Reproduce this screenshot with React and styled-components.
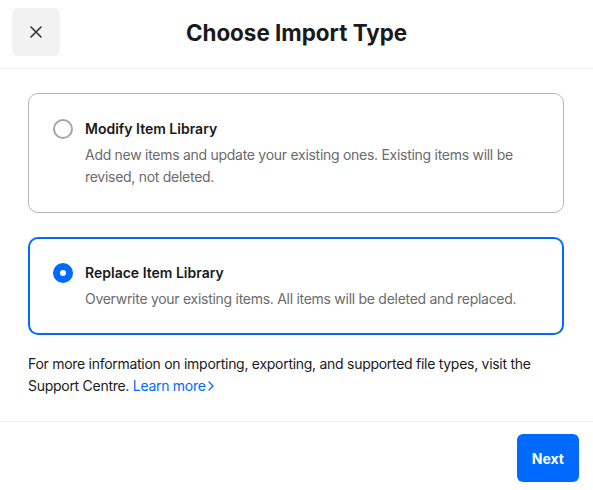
import React, { useState } from 'react';
import styled, { createGlobalStyle } from 'styled-components';

const GlobalStyle = createGlobalStyle`
  html, body {
    margin: 0;
    padding: 0;
    background: #fff;
  }
  body {
    font-family: Inter, "Noto Sans", sans-serif;
    color: #1a1a1a;
    -webkit-font-smoothing: antialiased;
  }
`;

const Page = styled.div`
  width: 593px;
  height: 490px;
  display: flex;
  flex-direction: column;
  overflow: hidden;
`;

const Header = styled.header`
  display: grid;
  grid-template-columns: 48px 1fr 48px;
  align-items: center;
  padding: 8px 12px 12px;
  border-bottom: 1px solid #ececec;
`;

const CloseButton = styled.button`
  width: 48px;
  height: 48px;
  border: none;
  border-radius: 6px;
  background: #f2f2f2;
  display: flex;
  align-items: center;
  justify-content: center;
  padding: 0;
  cursor: pointer;
`;

const Title = styled.h1`
  margin: 0;
  text-align: center;
  font-size: 22.4px;
  font-weight: 700;
  color: #1a1a1a;
`;

const Body = styled.main`
  padding: 24px 29px 24px 28px;
  display: flex;
  flex-direction: column;
  gap: 24px;
`;

const Card = styled.label`
  display: flex;
  gap: 12px;
  border-radius: 10px;
  border: ${p => (p.$selected ? '2px solid #006aff' : '1px solid #b5b5b5')};
  padding: ${p => (p.$selected ? '23px 23px' : '24px 24px')};
  cursor: pointer;
`;

const Radio = styled.span`
  flex: none;
  width: 20px;
  height: 20px;
  margin-top: 1px;
  border-radius: 50%;
  box-sizing: border-box;
  border: ${p => (p.$checked ? '7px solid #006aff' : '2px solid #a6a6a6')};
  background: #fff;
`;

const CardText = styled.div`
  display: flex;
  flex-direction: column;
  gap: 4px;
`;

const CardTitle = styled.div`
  font-size: 14px;
  line-height: 22px;
  font-weight: 600;
  color: #1a1a1a;
`;

const CardDesc = styled.div`
  font-size: 14px;
  line-height: 22px;
  letter-spacing: -0.28px;
  color: #6b6b6b;
`;

const Info = styled.p`
  margin: -6px 0 0;
  font-size: 14px;
  line-height: 22px;
  letter-spacing: -0.28px;
  color: #1a1a1a;
`;

const Link = styled.a`
  color: #006aff;
  text-decoration: none;
  display: inline-flex;
  align-items: center;
  gap: 2px;
`;

const Footer = styled.footer`
  display: flex;
  justify-content: flex-end;
  padding: 12px 14px 12px 12px;
  border-top: 1px solid #ececec;
`;

const NextButton = styled.button`
  height: 48px;
  padding: 0 15px;
  border: none;
  border-radius: 6px;
  background: #006aff;
  color: #fff;
  font-family: inherit;
  font-size: 14px;
  font-weight: 700;
  cursor: pointer;
`;

const options = [
  {
    id: 'modify',
    title: 'Modify Item Library',
    desc: 'Add new items and update your existing ones. Existing items will be revised, not deleted.',
  },
  {
    id: 'replace',
    title: 'Replace Item Library',
    desc: 'Overwrite your existing items. All items will be deleted and replaced.',
  },
];

export default function App() {
  const [selected, setSelected] = useState('replace');

  return (
    <Page>
      <GlobalStyle />
      <Header>
        <CloseButton aria-label="Close">
          <svg width="12" height="12" viewBox="0 0 12 12">
            <path d="M1 1L11 11M11 1L1 11" stroke="#333" strokeWidth="1.6" strokeLinecap="round" />
          </svg>
        </CloseButton>
        <Title>Choose Import Type</Title>
        <span />
      </Header>
      <Body>
        {options.map(o => (
          <Card key={o.id} $selected={selected === o.id} onClick={() => setSelected(o.id)}>
            <Radio $checked={selected === o.id} />
            <CardText>
              <CardTitle>{o.title}</CardTitle>
              <CardDesc>{o.desc}</CardDesc>
            </CardText>
          </Card>
        ))}
        <Info>
          For more information on importing, exporting, and supported file types, visit the Support Centre.{' '}
          <Link href="#">
            Learn more
            <svg width="6" height="10" viewBox="0 0 6 10">
              <path d="M1 1L5 5L1 9" stroke="#006aff" strokeWidth="1.3" fill="none" strokeLinecap="round" strokeLinejoin="round" />
            </svg>
          </Link>
        </Info>
      </Body>
      <Footer>
        <NextButton>Next</NextButton>
      </Footer>
    </Page>
  );
}
